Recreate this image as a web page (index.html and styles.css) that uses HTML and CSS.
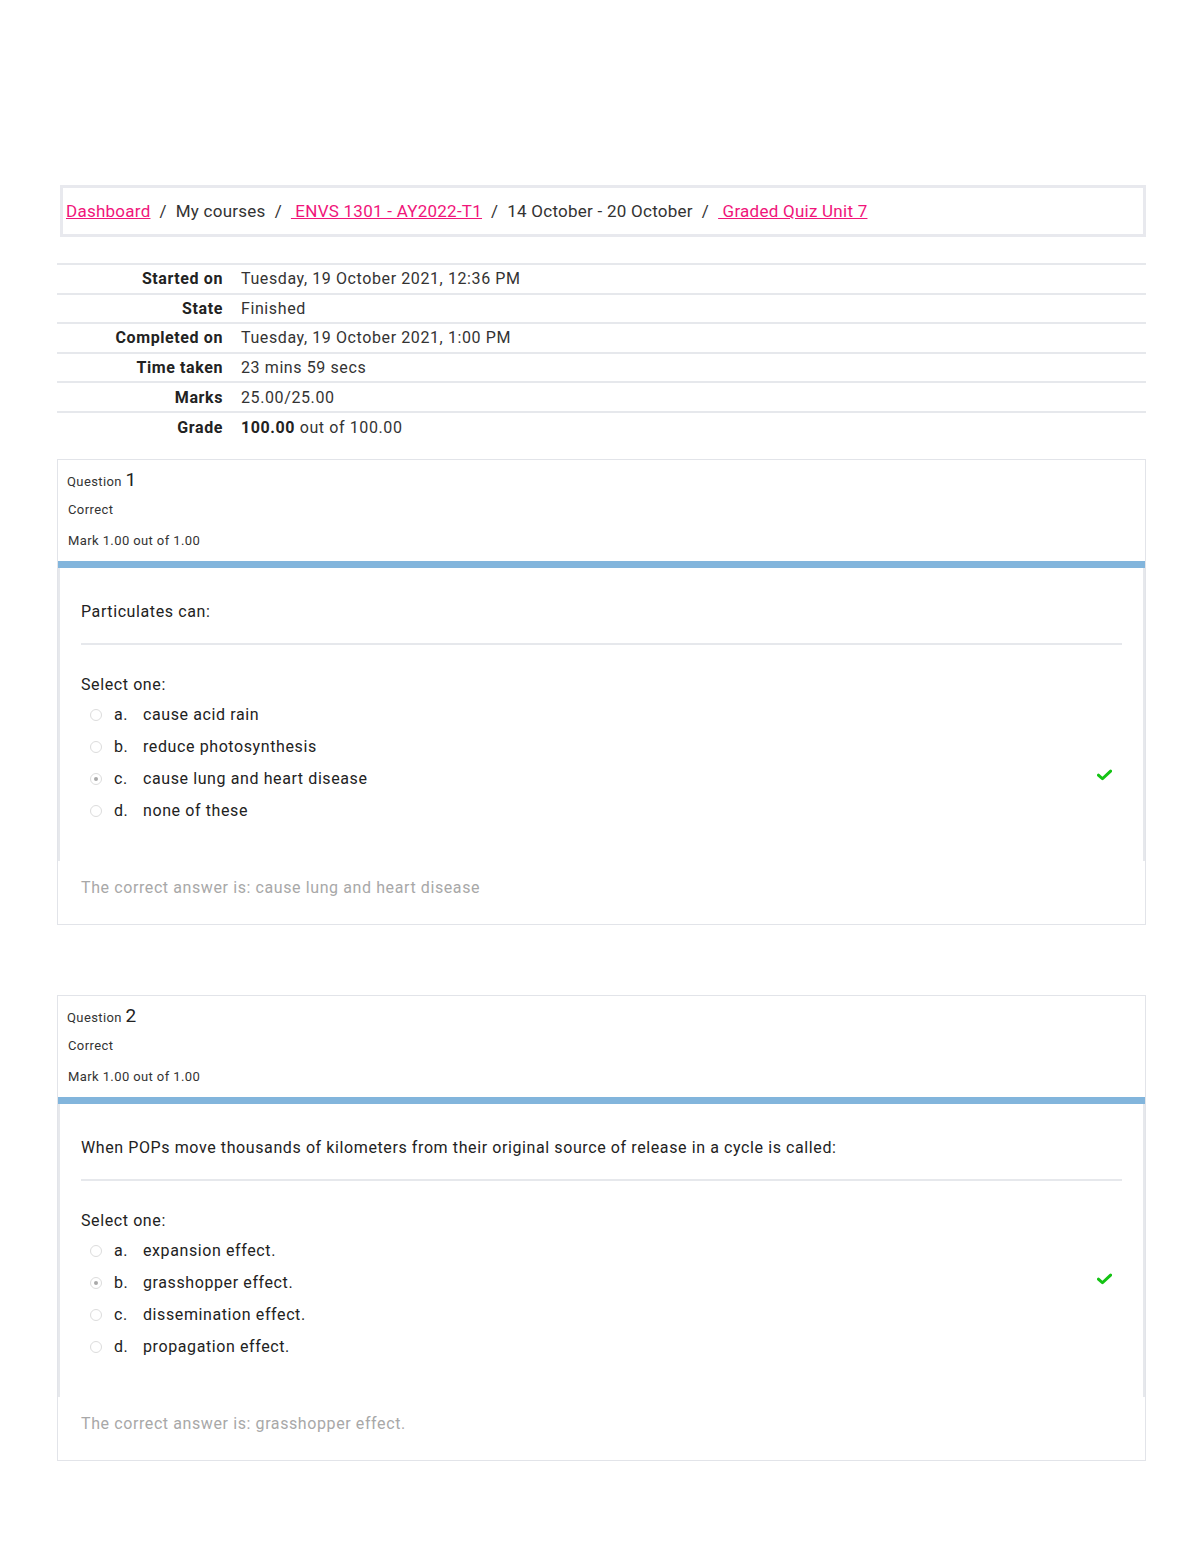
FILE: index.html
```html
<!DOCTYPE html>
<html>
<head>
<meta charset="utf-8">
<link rel="stylesheet" href="styles.css">
</head>
<body>
<div class="page">
  <nav class="crumbs">
    <a href="#">Dashboard</a><span class="sep">/</span><span>My courses</span><span class="sep">/</span>
    <a href="#" class="sp">&nbsp;ENVS 1301 - AY2022-T1</a><span class="sep">/</span><span>14 October - 20 October</span><span class="sep">/</span>
    <a href="#" class="sp">&nbsp;Graded Quiz Unit 7</a>
  </nav>

  <table class="summary">
    <tr><th>Started on</th><td>Tuesday, 19 October 2021, 12:36 PM</td></tr>
    <tr><th>State</th><td>Finished</td></tr>
    <tr><th>Completed on</th><td>Tuesday, 19 October 2021, 1:00 PM</td></tr>
    <tr><th>Time taken</th><td>23 mins 59 secs</td></tr>
    <tr><th>Marks</th><td>25.00/25.00</td></tr>
    <tr><th>Grade</th><td><b>100.00</b> out of 100.00</td></tr>
  </table>

  <section class="que">
    <div class="info">
      <div class="qno">Question <span class="num">1</span></div>
      <div class="state">Correct</div>
      <div class="grade">Mark 1.00 out of 1.00</div>
    </div>
    <div class="bar"></div>
    <div class="formulation">
      <div class="qtext">Particulates can:</div>
      <div class="prompt">Select one:</div>
      <div class="answers">
        <div class="opt"><span class="radio"></span><span class="let">a.</span><span>cause acid rain</span></div>
        <div class="opt"><span class="radio"></span><span class="let">b.</span><span>reduce photosynthesis</span></div>
        <div class="opt"><span class="radio on"></span><span class="let">c.</span><span>cause lung and heart disease</span>
          <svg class="tick" viewBox="0 0 16 12"><path d="M1.5 6.2 L5.8 10 L14.5 1.8" fill="none" stroke="#14c314" stroke-width="3.2" stroke-linejoin="round" stroke-linecap="round"/></svg></div>
        <div class="opt"><span class="radio"></span><span class="let">d.</span><span>none of these</span></div>
      </div>
    </div>
    <div class="feedback">The correct answer is: cause lung and heart disease</div>
  </section>

  <section class="que">
    <div class="info">
      <div class="qno">Question <span class="num">2</span></div>
      <div class="state">Correct</div>
      <div class="grade">Mark 1.00 out of 1.00</div>
    </div>
    <div class="bar"></div>
    <div class="formulation">
      <div class="qtext">When POPs move thousands of kilometers from their original source of release in a cycle is called:</div>
      <div class="prompt">Select one:</div>
      <div class="answers">
        <div class="opt"><span class="radio"></span><span class="let">a.</span><span>expansion effect.</span></div>
        <div class="opt"><span class="radio on"></span><span class="let">b.</span><span>grasshopper effect.</span>
          <svg class="tick" viewBox="0 0 16 12"><path d="M1.5 6.2 L5.8 10 L14.5 1.8" fill="none" stroke="#14c314" stroke-width="3.2" stroke-linejoin="round" stroke-linecap="round"/></svg></div>
        <div class="opt"><span class="radio"></span><span class="let">c.</span><span>dissemination effect.</span></div>
        <div class="opt"><span class="radio"></span><span class="let">d.</span><span>propagation effect.</span></div>
      </div>
    </div>
    <div class="feedback">The correct answer is: grasshopper effect.</div>
  </section>
</div>
</body>
</html>
```

FILE: styles.css
```css
html, body {
  margin: 0;
  padding: 0;
  background: #fff;
}
body {
  font-family: Roboto, "Liberation Sans", sans-serif;
  color: #222;
  letter-spacing: 0.6px;
}
.page {
  width: 1089px;
  margin-left: 57px;
  padding-top: 185px;
}
.crumbs {
  margin-left: 3px;
  border: 3px solid #e8e9ee;
  box-sizing: content-box;
  width: 1077px;
  display: flex;
  align-items: center;
  padding-left: 3px;
  padding-bottom: 1px;
  height: 45px;
  font-size: 17px;
  color: #333;
  white-space: nowrap;
  margin-bottom: 26px;
  letter-spacing: 0.25px;
}
.crumbs a {
  color: #f0157a;
  text-decoration: underline;
}
.crumbs .sep {
  margin: 0 9px;
}
.summary {
  width: 100%;
  border-collapse: collapse;
  font-size: 16px;
  margin-bottom: 17px;
}
.summary tr {
  border-top: 2px solid #e6e8ec;
  height: 29.6px;
}
.summary th {
  width: 166px;
  text-align: right;
  font-weight: 700;
  padding: 0;
  color: #222;
}
.summary td {
  padding: 0 0 0 18px;
  color: #333;
}
.summary b {
  font-weight: 700;
  color: #222;
}
.que {
  border: 1px solid #e2e4e9;
  margin-bottom: 70px;
}
.info {
  padding: 8px 9px 0;
  height: 101px;
  box-sizing: border-box;
  font-size: 13px;
  color: #333;
  letter-spacing: 0.4px;
}
.qno {
  height: 23px;
  line-height: 23px;
}
.qno .num {
  font-size: 19px;
  color: #222;
}
.state {
  margin-top: 10px;
  height: 18px;
  line-height: 18px;
  padding-left: 1px;
}
.grade {
  margin-top: 13px;
  height: 18px;
  line-height: 18px;
  padding-left: 1px;
}
.bar {
  height: 7px;
  background: #82b5dc;
}
.formulation {
  border-left: 2px solid #e6e8ec;
  border-right: 2px solid #e6e8ec;
  padding: 32px 21px 34px 21px;
}
.qtext {
  font-size: 16px;
  line-height: 24px;
  padding-bottom: 19px;
  border-bottom: 2px solid #e6e8ec;
  color: #222;
}
.prompt {
  margin-top: 27px;
  font-size: 16px;
  line-height: 26px;
  color: #222;
}
.answers {
  margin-top: 1px;
}
.opt {
  position: relative;
  display: flex;
  align-items: center;
  height: 32px;
  font-size: 16px;
  color: #222;
}
.radio {
  width: 12px;
  height: 12px;
  border: 1px solid #dcdcdc;
  border-radius: 50%;
  margin-left: 9px;
  margin-right: 12px;
  box-sizing: border-box;
  position: relative;
}
.radio.on::after {
  content: "";
  position: absolute;
  left: 3px;
  top: 3px;
  width: 4px;
  height: 4px;
  border-radius: 50%;
  background: #a9a9a9;
}
.let {
  width: 29px;
}
.tick {
  position: absolute;
  right: 10px;
  top: 6px;
  width: 15px;
  height: 12px;
}
.feedback {
  padding: 14px 23px 23px;
  font-size: 16px;
  line-height: 26px;
  color: #a8a8a8;
}
```
